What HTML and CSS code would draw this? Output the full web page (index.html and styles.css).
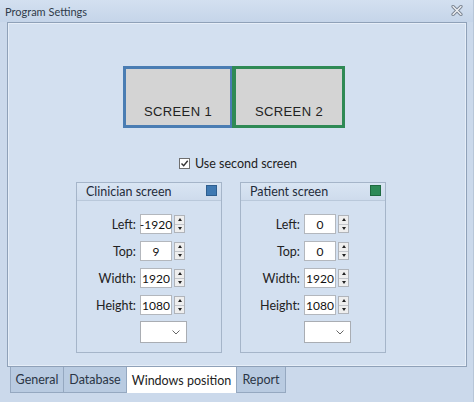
FILE: index.html
```html
<!DOCTYPE html>
<html>
<head>
<meta charset="utf-8">
<link rel="stylesheet" href="styles.css">
</head>
<body>
<div class="window">
  <div class="titlebar">
    <span class="title">Program Settings</span>
    <svg class="close" width="12" height="11" viewBox="0 0 12 11">
      <path d="M2 1.5 L10 9.5 M10 1.5 L2 9.5" stroke="#7d8794" stroke-width="3.2" stroke-linecap="round"/>
      <path d="M2 1.5 L10 9.5 M10 1.5 L2 9.5" stroke="#f2f4f7" stroke-width="1.2" stroke-linecap="round"/>
    </svg>
  </div>
  <div class="tabpage">
    <div class="screens">
      <div class="screen s1">SCREEN 1</div>
      <div class="screen s2">SCREEN 2</div>
    </div>
    <div class="checkrow">
      <span class="checkbox">
        <svg width="9" height="9" viewBox="0 0 9 9"><path d="M1.5 4.5 L3.7 6.8 L7.7 1.8" fill="none" stroke="#333" stroke-width="1.4"/></svg>
      </span>
      <span class="checklabel">Use second screen</span>
    </div>
    <div class="groups">
      <div class="group">
        <div class="ghead"><span>Clinician screen</span><span class="swatch blue"></span></div>
        <div class="fields">
          <span class="lbl">Left:</span>
          <div class="spin"><span class="num">-1920</span><span class="arrows"><i class="up"></i><i class="dn"></i></span></div>
          <span class="lbl">Top:</span>
          <div class="spin"><span class="num">9</span><span class="arrows"><i class="up"></i><i class="dn"></i></span></div>
          <span class="lbl">Width:</span>
          <div class="spin"><span class="num">1920</span><span class="arrows"><i class="up"></i><i class="dn"></i></span></div>
          <span class="lbl">Height:</span>
          <div class="spin"><span class="num">1080</span><span class="arrows"><i class="up"></i><i class="dn"></i></span></div>
          <span class="lbl"></span>
          <div class="combo"><svg width="8" height="5" viewBox="0 0 8 5"><path d="M0.5 0.5 L4 4 L7.5 0.5" fill="none" stroke="#666" stroke-width="1"/></svg></div>
        </div>
      </div>
      <div class="group">
        <div class="ghead"><span>Patient screen</span><span class="swatch green"></span></div>
        <div class="fields">
          <span class="lbl">Left:</span>
          <div class="spin"><span class="num">0</span><span class="arrows"><i class="up"></i><i class="dn"></i></span></div>
          <span class="lbl">Top:</span>
          <div class="spin"><span class="num">0</span><span class="arrows"><i class="up"></i><i class="dn"></i></span></div>
          <span class="lbl">Width:</span>
          <div class="spin"><span class="num">1920</span><span class="arrows"><i class="up"></i><i class="dn"></i></span></div>
          <span class="lbl">Height:</span>
          <div class="spin"><span class="num">1080</span><span class="arrows"><i class="up"></i><i class="dn"></i></span></div>
          <span class="lbl"></span>
          <div class="combo"><svg width="8" height="5" viewBox="0 0 8 5"><path d="M0.5 0.5 L4 4 L7.5 0.5" fill="none" stroke="#666" stroke-width="1"/></svg></div>
        </div>
      </div>
    </div>
  </div>
  <div class="tabs">
    <span class="tab">General</span>
    <span class="tab">Database</span>
    <span class="tab active">Windows position</span>
    <span class="tab">Report</span>
  </div>
</div>
</body>
</html>
```
FILE: styles.css
```css
* { box-sizing: border-box; }
html, body { margin: 0; padding: 0; }
body { width: 474px; height: 402px; overflow: hidden; font-family: "Lato", "Noto Sans", sans-serif; }

.window {
  width: 474px;
  height: 402px;
  background: #cbd9eb;
  display: flex;
  flex-direction: column;
  border-right: 1px solid #b7c6d8;
}

.titlebar {
  height: 22px;
  display: flex;
  align-items: center;
  justify-content: space-between;
  padding: 0 10px 0 5px;
  background: linear-gradient(#d3e0f0, #c5d5e9);
}
.title { font-size: 11px; color: #2f3b4a; }
.close { margin-top: -1px; }

.tabpage {
  margin: 0 6px 0 7px;
  height: 345px;
  border: 1px solid #8fa1b8;
  box-shadow: inset 0 0 0 1px #e6eef8;
  background: #d3e0f0;
  display: flex;
  flex-direction: column;
  align-items: center;
  padding-left: 1px;
}

.screens {
  display: flex;
  margin-top: 43px;
  margin-left: -7px;
}
.screen {
  height: 62px;
  background: #d4d4d4;
  display: flex;
  align-items: flex-end;
  justify-content: center;
  padding-bottom: 6px;
  font-family: "Liberation Sans", sans-serif;
  font-size: 13px;
  letter-spacing: 0.4px;
  color: #222;
}
.s1 { width: 110px; border: 3px solid #4a7db3; }
.s2 { width: 113px; border: 3px solid #2f8a55; border-left-width: 4px; margin-left: -1px; }

.checkrow {
  display: flex;
  align-items: center;
  height: 16px;
  margin-top: 27px;
  margin-left: 1px;
  gap: 5px;
}
.checkbox {
  width: 11px;
  height: 11px;
  border: 1px solid #6f6f6f;
  background: #fff;
  display: flex;
  align-items: center;
  justify-content: center;
}
.checklabel { font-size: 12.5px; color: #222; }

.groups {
  display: flex;
  gap: 18px;
  margin-top: 11px;
  margin-left: -13px;
}
.group {
  width: 146px;
  height: 171px;
  border: 1px solid #a5b5c9;
  background: #d3e0f0;
}
.ghead {
  height: 18px;
  display: flex;
  align-items: center;
  justify-content: space-between;
  padding: 0 4px 0 9px;
  font-size: 12.5px;
  color: #1f2b3a;
  background: linear-gradient(#d9e5f3, #cedbec);
  border-bottom: 1px solid #b9c8da;
}
.swatch { width: 11px; height: 11px; margin-top: -3px; }
.blue { background: #3f79b2; border: 1px solid #2e5e8f; }
.green { background: #2e8a57; border: 1px solid #1f6a40; }

.fields {
  display: grid;
  grid-template-columns: 59px auto;
  column-gap: 4px;
  row-gap: 7px;
  padding-top: 13px;
  align-items: center;
}
.lbl { text-align: right; font-size: 12.5px; color: #222; }
.spin { display: flex; align-items: center; height: 20px; gap: 2px; }
.num {
  width: 32px;
  height: 20px;
  background: #fff;
  border: 1px solid #b3b7bd;
  font-size: 12px;
  color: #111;
  display: flex;
  align-items: center;
  justify-content: center;
}
.arrows {
  width: 11px;
  height: 18px;
  display: flex;
  flex-direction: column;
  border: 1px solid #b0b4ba;
  background: #eeeeee;
}
.arrows i {
  flex: 1;
  display: flex;
  align-items: center;
  justify-content: center;
}
.arrows i.up { border-bottom: 1px solid #c2c5ca; }
.arrows i::after {
  content: "";
  width: 0;
  height: 0;
  border-left: 2.5px solid transparent;
  border-right: 2.5px solid transparent;
}
.arrows i.up::after { border-bottom: 3px solid #222; }
.arrows i.dn::after { border-top: 3px solid #222; }

.combo {
  width: 47px;
  height: 22px;
  margin-top: -1px;
  background: #fff;
  border: 1px solid #a9adb3;
  display: flex;
  align-items: center;
  justify-content: flex-end;
  padding-right: 6px;
}

.tabs {
  display: flex;
  margin-left: 10px;
  height: 26px;
}
.tab {
  height: 26px;
  display: flex;
  align-items: center;
  justify-content: center;
  font-size: 12.5px;
  color: #2a3545;
  background: #b9cbe1;
  border: 1px solid #95a8c0;
  border-top: none;
  border-left: none;
}
.tab:first-child { border-left: 1px solid #95a8c0; }
.tab:nth-child(1) { width: 54px; }
.tab:nth-child(2) { width: 63px; }
.tab:nth-child(3) { width: 110px; }
.tab:nth-child(4) { width: 49px; }
.tab.active { background: #fff; color: #222; border-bottom: none; }
```
